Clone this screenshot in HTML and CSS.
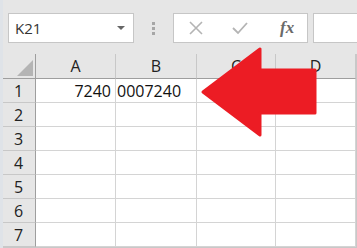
FILE: index.html
```html
<!DOCTYPE html>
<html lang="en">
<head>
    <meta charset="UTF-8">
    <title>Sheet</title>
    <link rel="stylesheet" href="styles.css">
</head>
<body>
    <div class="app">
        <div class="toolbar">
            <div class="namebox">
                <span>K21</span>
                <span class="caret"></span>
            </div>
            <div class="grip">
                <i></i><i></i><i></i>
            </div>
            <div class="controls">
                <svg width="16" height="16" viewBox="0 0 16 16"><path d="M2 2 L14 14 M14 2 L2 14" stroke="#b4b4b4" stroke-width="1.6" fill="none"/></svg>
                <svg width="18" height="16" viewBox="0 0 18 16"><path d="M2 8 L7 13 L16 3" stroke="#b4b4b4" stroke-width="1.8" fill="none"/></svg>
                <span class="fx">fx</span>
            </div>
            <div class="input"></div>
        </div>
        <div class="sheet">
            <div class="corner"><span class="tri"></span></div>
            <div class="colhead">A</div>
            <div class="colhead">B</div>
            <div class="colhead">C</div>
            <div class="colhead">D</div>
            <div class="edge"></div>

            <div class="rowhead">1</div>
            <div class="cell num">7240</div>
            <div class="cell txt">0007240</div>
            <div class="cell"></div>
            <div class="cell"></div>
            <div class="edge"></div>

            <div class="rowhead">2</div>
            <div class="cell"></div><div class="cell"></div><div class="cell"></div><div class="cell"></div>
            <div class="edge"></div>
            <div class="rowhead">3</div>
            <div class="cell"></div><div class="cell"></div><div class="cell"></div><div class="cell"></div>
            <div class="edge"></div>
            <div class="rowhead">4</div>
            <div class="cell"></div><div class="cell"></div><div class="cell"></div><div class="cell"></div>
            <div class="edge"></div>
            <div class="rowhead">5</div>
            <div class="cell"></div><div class="cell"></div><div class="cell"></div><div class="cell"></div>
            <div class="edge"></div>
            <div class="rowhead">6</div>
            <div class="cell"></div><div class="cell"></div><div class="cell"></div><div class="cell"></div>
            <div class="edge"></div>
            <div class="rowhead">7</div>
            <div class="cell"></div><div class="cell"></div><div class="cell"></div><div class="cell"></div>
            <div class="edge"></div>
        </div>
        <!-- red arrow drawn over the sheet -->
        <svg class="arrow" width="357" height="248" viewBox="0 0 357 248">
            <polygon points="203,92 260,49 260,70 315,70 315,113 260,113 260,135" fill="#ec1c24" stroke="#ec1c24" stroke-width="3" stroke-linejoin="round"/>
        </svg>
    </div>
</body>
</html>
```

FILE: styles.css
```css
*{
    margin: 0;
    padding: 0;
    box-sizing: border-box;
}
body{
    background: #e6e6e6;
    font-family: "Open Sans", "Noto Sans", sans-serif;
    overflow: hidden;
}
.app{
    position: relative;
    width: 357px;
    height: 248px;
    background: #e6e6e6;
    border-left: 3px solid #dfe3e8;
}
.toolbar{
    height: 54px;
    display: flex;
    align-items: flex-start;
    padding-top: 13px;
    padding-left: 5px;
}
.namebox{
    width: 126px;
    height: 30px;
    background: #fff;
    border: 1px solid #c6c6c6;
    display: flex;
    align-items: center;
    justify-content: space-between;
    padding: 0 8px 0 6px;
    font-size: 15px;
    color: #333;
}
.caret{
    width: 0;
    height: 0;
    border-left: 4px solid transparent;
    border-right: 4px solid transparent;
    border-top: 4px solid #666;
}
.grip{
    width: 39px;
    height: 30px;
    display: flex;
    flex-direction: column;
    align-items: center;
    justify-content: center;
    gap: 2px;
}
.grip i{
    width: 3px;
    height: 3px;
    background: #a6a6a6;
}
.controls{
    width: 135px;
    height: 30px;
    background: #fff;
    border: 1px solid #c6c6c6;
    display: flex;
    align-items: center;
    padding-left: 14px;
    gap: 27px;
}
.fx{
    font-family: "Liberation Serif", serif;
    font-style: italic;
    font-weight: bold;
    font-size: 17px;
    color: #6a6a6a;
    margin-left: 4px;
}
.input{
    flex: 1;
    height: 30px;
    margin-left: 5px;
    background: #fff;
    border: 1px solid #c6c6c6;
    border-right: none;
}
.sheet{
    display: grid;
    grid-template-columns: 33px 80px 81px 79px 80px 1fr;
    grid-template-rows: 25px repeat(7, 24px);
    background: #fff;
    border-bottom: 2px solid #c8c8c8;
}
.corner,.colhead,.rowhead{
    background: #e6e6e6;
    font-size: 16px;
    color: #222;
    display: flex;
    align-items: center;
    justify-content: center;
}
.corner{
    border-right: 1px solid #9e9e9e;
    border-bottom: 1px solid #9e9e9e;
    justify-content: flex-end;
    align-items: flex-end;
    padding: 0 2px 2px 0;
}
.tri{
    width: 0;
    height: 0;
    border-left: 16px solid transparent;
    border-bottom: 16px solid #b4b4b4;
}
.colhead{
    border-right: 1px solid #c8c8c8;
    border-bottom: 1px solid #9e9e9e;
}
.rowhead{
    border-right: 1px solid #9e9e9e;
    border-bottom: 1px solid #c8c8c8;
    padding-right: 1px;
}
.cell{
    border-right: 1px solid #d4d4d4;
    border-bottom: 1px solid #d4d4d4;
    font-size: 16px;
    color: #111;
    display: flex;
    align-items: center;
    padding: 0 4px 0 1px;
    white-space: nowrap;
}
.num{
    justify-content: flex-end;
}
.edge{
    background: #c8c8c8;
}
.arrow{
    position: absolute;
    left: -3px;
    top: 0;
}
```
